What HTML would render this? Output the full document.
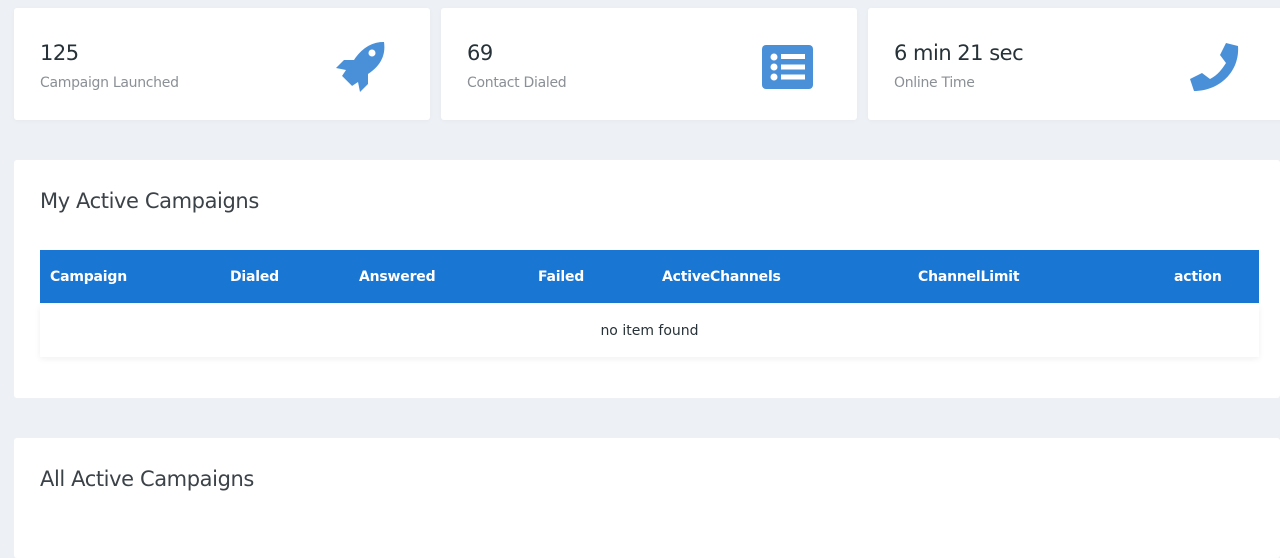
<!DOCTYPE html>
<html><head><style>
body{margin:0;background:#edf1f5;font-family:"DejaVu Sans","Liberation Sans",sans-serif;width:1280px;height:547px;overflow:hidden;position:relative}
.card{position:absolute;top:8px;height:112px;background:#fff;border-radius:3px;box-shadow:0 1px 4px rgba(0,0,0,.04)}
.num{position:absolute;left:26px;top:33px;font-size:21px;color:#263238;letter-spacing:-0.5px}
.lbl{position:absolute;left:26px;top:67px;font-size:14px;color:#8a9096;letter-spacing:-0.3px}
.ic{position:absolute;top:34px}
.panel{position:absolute;left:14px;width:1266px;background:#fff;border-radius:3px}
h2{position:absolute;left:26px;margin:0;font-weight:normal;font-size:21px;color:#3b4248;letter-spacing:-0.4px}
.thead{position:absolute;left:26px;top:90px;width:1219px;height:53px;background:#1976d2;color:#fff;font-weight:bold;font-size:14px;letter-spacing:-0.2px}
.thead span{position:absolute;top:19px}
.row{position:absolute;left:26px;top:144px;width:1219px;height:53px;background:#fff;box-shadow:0 2px 6px rgba(0,0,0,.06);font-size:14px;color:#263238;text-align:center;line-height:55px}
</style></head><body>
<div class="card" style="left:14px;width:416px"><div class="num">125</div><div class="lbl">Campaign Launched</div>
<svg class="ic" style="left:320px;top:32px" width="54" height="54" viewBox="0 0 54 54"><path d="M50 2 C38 2 28 8 20 20 L10 20 L2 28 L12 30 L8 36 L18 46 L24 42 L26 52 L34 44 L34 34 C46 26 52 16 50 2Z" fill="#4a90d9"/><circle cx="38" cy="13" r="3.5" fill="#fff"/><path d="M8 36 L2 42 L12 52 L18 46Z" fill="#fff"/></svg></div>
<div class="card" style="left:441px;width:416px"><div class="num">69</div><div class="lbl">Contact Dialed</div>
<svg class="ic" style="left:321px;top:37px" width="51" height="44" viewBox="0 0 51 44"><rect width="51" height="44" rx="4" fill="#4a90d9"/><circle cx="12" cy="12" r="3.5" fill="#fff"/><circle cx="12" cy="22" r="3.5" fill="#fff"/><circle cx="12" cy="32" r="3.5" fill="#fff"/><rect x="19" y="9" width="24" height="5" fill="#fff"/><rect x="19" y="19.5" width="24" height="5" fill="#fff"/><rect x="19" y="29.5" width="24" height="5" fill="#fff"/></svg></div>
<div class="card" style="left:868px;width:420px"><div class="num">6 min 21 sec</div><div class="lbl">Online Time</div>
<svg class="ic" style="left:320px;top:33px" width="52" height="52" viewBox="0 0 52 52"><path d="M38 2 L50 5 C52 30 32 50 6 50 L2 38 L14 32 L22 38 C30 34 34 28 38 22 L32 14Z" fill="#4a90d9"/></svg></div>
<div class="panel" style="top:160px;height:238px"><h2 style="top:29px">My Active Campaigns</h2>
<div class="thead"><span style="left:10px">Campaign</span><span style="left:190px">Dialed</span><span style="left:319px">Answered</span><span style="left:498px">Failed</span><span style="left:622px">ActiveChannels</span><span style="left:878px">ChannelLimit</span><span style="left:1134px">action</span></div>
<div class="row">no item found</div></div>
<div class="panel" style="top:438px;height:120px"><h2 style="top:29px">All Active Campaigns</h2></div>
</body></html>
